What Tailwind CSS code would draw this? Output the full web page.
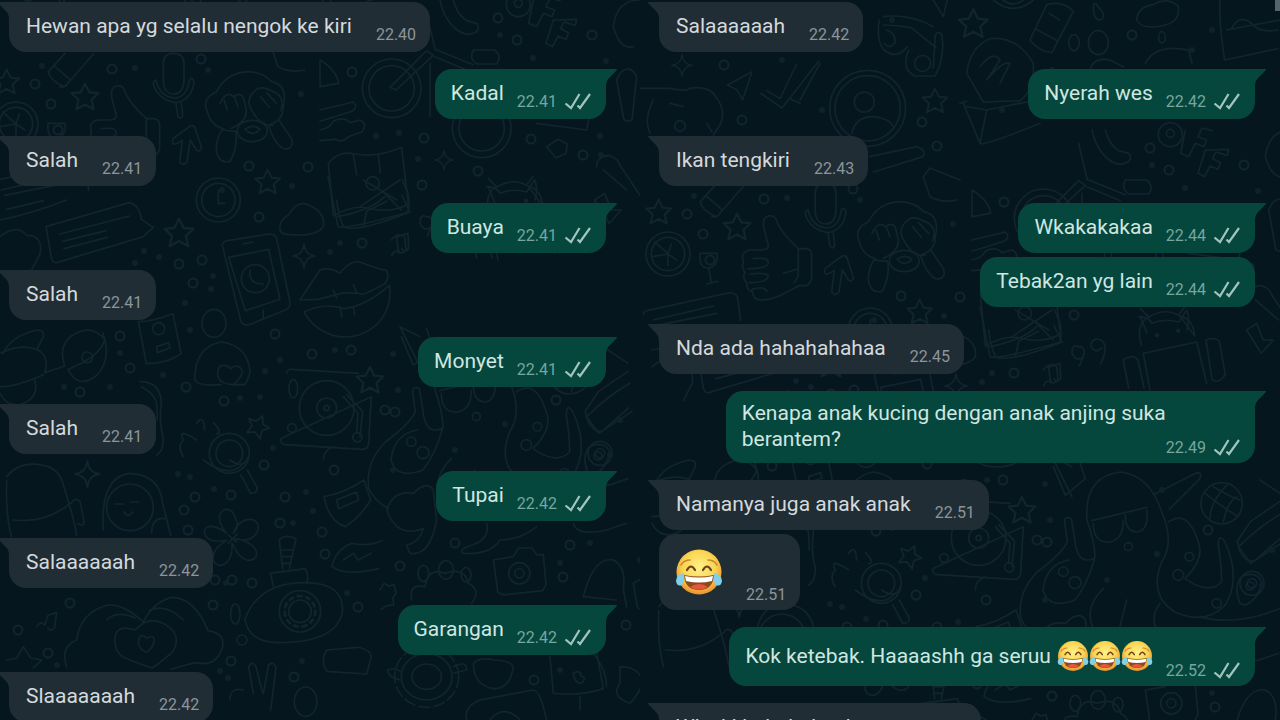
<!DOCTYPE html>
<html lang="id">
<head>
  <meta charset="UTF-8">
  <meta name="viewport" content="width=device-width, initial-scale=1.0">
  <title>Chat</title>
  <script src="https://cdn.jsdelivr.net/npm/@tailwindcss/browser@4"></script>
</head>
<body class="bg-[#05161e] font-['Roboto',sans-serif]">
  <!-- shared shapes -->
  <svg class="absolute w-0 h-0" aria-hidden="true">
    <defs>
      <symbol id="ticks" viewBox="0 0 28 18">
        <path d="M1.5 10.5 L7 15 L15.5 1 M13.5 12.5 L16 15 L26 1" fill="none" stroke="currentColor" stroke-width="2.2"/>
      </symbol>
      <symbol id="tail-in" viewBox="0 0 28 18">
        <path d="M0 0 H28 V16 H11 Q11 12 8 9 L1 2 Q0 1 0 0Z" fill="currentColor"/>
      </symbol>
      <symbol id="tail-out" viewBox="0 0 28 18">
        <path d="M28 0 H0 V16 H17 Q17 12 20 9 L27 2 Q28 1 28 0Z" fill="currentColor"/>
      </symbol>
      <radialGradient id="face" cx="50%" cy="40%" r="60%">
        <stop offset="0" stop-color="#fff08a"/>
        <stop offset=".6" stop-color="#fbd552"/>
        <stop offset="1" stop-color="#e8922e"/>
      </radialGradient>
      <symbol id="joy" viewBox="0 0 48 48">
        <circle cx="24" cy="24" r="22.5" fill="url(#face)"/>
        <path d="M6 17 Q9 12 15 12 M42 17 Q39 12 33 12" fill="none" stroke="#c98a2c" stroke-width="1.6" stroke-linecap="round"/>
        <path d="M12 22 Q16 15 20 22 M28 22 Q32 15 36 22" fill="none" stroke="#6b4219" stroke-width="2.2" stroke-linecap="round"/>
        <path d="M9 27 Q24 30 39 27 Q38 42 24 42 Q10 42 9 27Z" fill="#8a4a1c"/>
        <path d="M10 28 Q24 31 38 28 L37 33 Q24 36 11 33Z" fill="#fff"/>
        <path d="M15 39 Q24 33 33 39 Q24 44 15 39Z" fill="#e8553b"/>
        <path d="M9 25 Q1 27 1 33 Q2 39 7 37 Q10 34 9 25Z M39 25 Q47 27 47 33 Q46 39 41 37 Q38 34 39 25Z" fill="#7fd0e8"/>
      </symbol>
      <path id="star" d="M0-30 L10-10 L31-8 L15 7 L20 29 L0 18 L-20 29 L-15 7 L-31-8 L-10-10Z"/>
      <path id="spark" d="M0-36 Q3-4 34 0 Q3 4 0 36 Q-3 4 -34 0 Q-3-4 0-36Z"/>

      <!-- chat wallpaper tile, drawn at three times its size -->
      <g id="doodles" fill="none" stroke="#12252e" stroke-width="5" stroke-linejoin="round" stroke-linecap="round">
        <!-- microphone, thumb, monkey -->
        <g transform="scale(.3333)">
          <path d="M490 190 q0-30 30-30 q32 0 32 30 v54 q-4 38-30 38 q-30 0-32-38z M468 240 q-14 4-4 24 q20 40 66 44 q46-10 52-62 q-4-18-14-6 q-6 50-42 54 q-46-2-58-54z M528 310 l6 40 q8 8 14-2 l-4-40"/>
          <path d="M650 275 q30-58 95-60 q45 2 70 30 q50 10 35 75 q0 40-38 52 M650 275 q-46 20-28 60 q10 42 50 52 M660 310 q20-40 40-20 q30-20 34 20 q20 50-40 75 M672 300 l10 30 M704 292 l10 28 M770 268 q-40 30-10 70 q20 40 60 38 M770 268 q20-10 44 4 q44 16 28 60 M782 290 l26 32 M800 278 l30 32"/>
          <ellipse cx="757" cy="393" rx="45" ry="32"/><path d="M735 388 q24-18 45 0 q-20 24-45 0z"/>
          <path d="M665 390 q-26 50-10 80 q10 20 36 14 q24-50 16-90z M805 375 q20 60 48 72 q30 0 22-30 l-38-56"/>
          <path d="M145 215 l50-55 M180 260 q14 4 22-8 l78-90 M145 215 q4 26 48 46 M165 200 l46 40"/>
          <circle cx="48" cy="372" r="50"/><circle cx="48" cy="372" r="66"/><path d="M48 372 l-40-36 M48 372 l-48 8 M48 372 l10-30 M48 372 l26 18 M48 372 l0 34"/>
          <use href="#star" transform="translate(255 290) scale(1.3)"/><use href="#star" transform="translate(20 245) scale(1.2)"/><use href="#star" transform="translate(803 545) scale(1.2)"/>
          <circle cx="655" cy="600" r="50"/><circle cx="655" cy="600" r="66"/><path d="M655 570 v40 h20"/>
        </g>
        <g transform="translate(-12 70) scale(.3333)">
          <path d="M385 48 q-18 4-14 34 l14 54 q0 14-20 14 h-36 q-30 8-18 34 q-8 18 4 34 q-10 14 6 32 q-2 22 16 24 q0 24 24 26 q40 0 80-24 l40-20 q26 8 34-20 v-70 q0-18-16-20 h-24 q-54-50-66-86 q-4-14-24-12z M475 150 v76 l-12 22 M340 176 q50-6 44 16 q-6 14-60 14 M330 222 q60-6 54 10 q-6 16-56 16 M336 268 q40-10 44 6 M430 220 l40-12"/>
          <path d="M555 206 l52-38 q10-4 14 6 l20 60 q-6 14-16 6 l-18-30 -10 66 q-10 14-22 0 l8-64 -20 10 q-14 2-8-16z"/>
          <path d="M180 160 q-4 44 26 44 q28-4 26-44z M206 204 l8 44 M200 252 l34-8"/>
          <path d="M10 345 q0-10 14-14 l240-52 q28-4 30 22 l8 60 M40 360 l180-42 M50 376 l180-36"/>
        </g>
        <!-- pizza, bicycle, letters, map -->
        <g transform="translate(320 0) scale(.3333)">
          <circle cx="215" cy="265" r="88"/><circle cx="215" cy="265" r="68"/><circle cx="485" cy="385" r="88"/><circle cx="485" cy="385" r="68"/>
          <path d="M210 262 l110-110 20 14 -112 104z M350 150 l110 44 M345 170 l100 42 M320 40 l26 110 M460 150 h64 q24 20 6 42 h-60 q-24-16-10-42z M330 190 v160"/>
          <path d="M360 0 q10 50 40 80 q30 30 60 20 q24-10 10-30 l-30-8 q-30-20-40-62"/>
          <path d="M640 0 l-14 70 24 10 20-40 26 10 8-20 -26-10 12-26 30 8 M700 60 l-22 70 20 10 16-32 24 10 8-20 -24-12 10-20 34 10 4-18z"/>
          <circle cx="595" cy="14" r="36"/><circle cx="595" cy="10" r="12"/>
          <path d="M0 180 q50 30 56 70 l-56 10z M0 330 l100-24 q16 16-4 28 l-96 30 M0 390 q30-6 40-26 q30-16 50 4 l30-8 q24 10 6 36 l-40 14 q-20 20-40 8 l-46 4"/>
          <path d="M25 490 q30-40 80-28 q70 12 140-20 l20 170 q-50 30-120 12 q-50-10-105 24z M100 465 l10 60 M175 465 l6 54 M130 540 l100 60 M120 620 l120-80"/>
          <circle cx="158" cy="550" r="20"/>
          <path d="M880 80 q10-80 80-80 M880 80 q20 70 60 60 M900 220 q30-30 50 10 l-14 130 q-24 10-26-10 l-20-110z"/>
          <path d="M650 370 l150 20 8-40 M680 440 l34-22 28 14 -4 28 -30 14z M830 500 q0-30 36-34 q30 10 34 30 l60 90 M850 510 l70 60"/>
          <path d="M500 560 q30 0 40 20 q40-16 80-4 l24-36 q10 20 2 60 M505 560 l20 50"/>
          <use href="#spark" transform="translate(372 480) scale(.8)"/>
        </g>
        <!-- upper band -->
        <g transform="translate(-12 -130) scale(.3333)">
          <circle cx="683" cy="325" r="114"/><circle cx="683" cy="325" r="98"/><circle cx="673" cy="306" r="30"/><path d="M636 400 q10-50 64-50 q50 6 60 30"/>
          <path d="M730 50 q80-10 150 30 M730 75 q40 0 84 8 l74 60 M718 60 q-10 60 14 90 q40 30 70-10 M740 90 q30 10 24 40 q-16 20-32 0 M806 150 q-24 60 20 78 l60 0 q30-60 20-124 q-10-14-20 0 l-6 100"/><circle cx="848" cy="190" r="24"/>
          <path d="M362 280 l64 44 110-140 M380 272 l40 24 50-104 M480 300 l60-110 M450 296 l30 14 M262 255 l74-40 -28 84 -18-30z"/>
          <path d="M0 265 h90 q50 10 60 0 q60-10 80 30 q30 40 10 80 l-20 30 M40 300 q-30 60-10 100 M90 310 l40 10 M200 370 l16 26"/><circle cx="120" cy="378" r="16"/>
          <use href="#spark" transform="translate(126 196) scale(.9)"/><use href="#star" transform="translate(885 302) scale(1.2)"/>
          <path d="M690 470 l140-30 q30 10 20 30 l-150 46 M850 530 l20-26 90 36 M850 530 l20 60 q40 20 80 10 M880 0 l30 50 14-60"/>
        </g>
        <g transform="translate(308 -130) scale(.3333)">
          <path d="M20 220 q10-80 70-104 q80-10 130 74 q4 80-40 112 l-110 4z M60 200 q40-50 60-20 l-40 60 q50-60 70-50 l-30 60"/>
          <path d="M0 310 l20-6 M10 310 l50 120 q10 10 180-60 M20 320 l60 10 200-40 M80 330 l-20 100"/>
          <use href="#star" transform="translate(40 70) scale(1.4)"/>
          <path d="M210 120 l50-106 q50-14 80 20 l-64 124 q-40-4-66-38z M226 86 l66 36 M268 40 l30 20"/>
          <path d="M530 60 q4-40 50-46 q40-24 74 4 q10 50-50 60 q-60 10-74-18z M780 0 q-4 60 14 180 l160-34 M800 90 l160-30 M815 86 q20-44 60-16 q20 30 80 20 M556 190 q30-60 130-40 l10 40 M390 210 q10-40 60-30 l40 20"/>
          <ellipse cx="415" cy="128" rx="30" ry="36"/><ellipse cx="342" cy="128" rx="16" ry="24"/><ellipse cx="606" cy="112" rx="10" ry="17"/>
          <path d="M400 20 q4-20 14 0 q30 30 6 40 q-20 0-20-40z M100 0 q60 50 120 0 M130 0 q30 24 60 0"/>
        </g>
        <!-- banner, star, phone, lips, glasses, turntable -->
        <g transform="translate(0 200) scale(.3333)">
          <path d="M0 60 q100-20 200-60 M20 28 l110-26 M138 80 l250-72 q30 6 36 50 l36 24 -30 28 -260 78 q-10 2-16-14z M180 102 l208-54 M188 124 l130-32 M192 146 l130-34 M0 110 q50-40 80-4 q50 0 40 56 l-26 50"/>
          <use href="#star" transform="translate(537 98) scale(1.4)"/>
          <path d="M668 140 q-4-14 14-18 l124-20 q20 0 24 14 l40 190 q2 18-14 24 l-108 44 q-20 4-26-12z M686 172 l120-24 34 150 -104 34z M730 132 l30-6 M790 330 v24"/>
          <circle cx="766" cy="236" r="42"/><path d="M750 212 q-6 40 40 40"/>
          <path d="M840 90 q-4-30 26-46 q30-50 70-24 q40 20 34 60 q-20 30-100 24 q-26 0-30-14z M1010 0 q4 40 20 80 q40 20 200-44 l-24-50 M1090 80 l10-46 60-30"/>
          <path d="M900 300 l60-90 q30-10 60 10 q30-40 60-34 q50 20 80 26 q10 20-6 40 l-60 30 -60-4 -80 20z M912 336 q60-30 120-10 q70-10 136-70 q10 60-30 110 q-60 60-140 40 q-60-20-86-70z M1000 270 l10 24 M1060 254 l10 26 M1020 320 l6 30 M1060 320 l4 24"/>
          <use href="#spark" transform="translate(912 168)"/>
          <path d="M1175 166 q10-20 22-8 M1196 158 l-6-46 34-12 2 46 q-14 16-20 0"/>
          <path d="M415 365 q40 0 104-24 l24 120 q-40 30-104 30z M470 440 l36-12 4 16 -38 14z"/><circle cx="476" cy="386" r="18"/>
          <ellipse cx="642" cy="370" rx="36" ry="42"/><path d="M584 540 q0-100 80-114 q80 10 86 90 q-6 26-16 38 h-36 q-60-6-40-54 q20-10 34 6 q24-20 36 10 q-10 26-30 38 M584 540 q10 20 80 14"/>
          <path d="M10 460 q20-50 100-70 q24 0 20 20 l-20 40 M0 460 q60-30 110-12 q40 20 24 70 l60-20 q-20-60 20-90 q60-40 100 10 q-10 50-110 90 q30 60 84 20 q50-50 20-130 M0 560 q50 0 130-36 M0 580 q20 40 60 34 q60-20 44-74"/><circle cx="262" cy="472" r="16"/>
          <path d="M420 545 q60 0 64 60 q-8 60 6 110 q0 40-20 50 M424 560 q40 20 46 50 l2 50"/>
          <path d="M860 520 q2-14 16-12 l200 12 M1114 590 l-8 140 q-4 20-20 18 l-230-14 q-14 0-14-18z"/>
          <circle cx="980" cy="624" r="82"/><circle cx="980" cy="624" r="30"/><circle cx="980" cy="624" r="8"/>
          <path d="M1030 590 l44 50 -4 60 M1040 584 l48 50 -8 76"/><circle cx="1072" cy="712" r="14"/><ellipse cx="880" cy="566" rx="13" ry="28"/><circle cx="876" cy="684" r="13"/>
          <use href="#star" transform="translate(1110 540) scale(1.3)"/><use href="#star" transform="translate(774 678) rotate(25) scale(1.1)"/>
          <circle cx="688" cy="760" r="60"/><circle cx="688" cy="760" r="40"/><path d="M590 720 q-60-40-40 0 q-20 20 0 50 M590 670 q20-30 24 20 M640 668 q30 30 10 34"/>
          <path d="M1200 380 l60 120 M1200 380 l60 30"/>
        </g>
        <!-- ghost, astronaut, flower, hands, guitar -->
        <g transform="translate(0 460) scale(.3333)">
          <path d="M20 60 q-4 100 14 170 M20 50 q40-50 110-34 q50 10 60 60 q30 90 40 150 M40 180 q100 10 170-50 M214 130 q10-20 26-6 l12 60 q0 20-18 6"/>
          <use href="#spark" transform="translate(262 42) scale(1.1)"/>
          <circle cx="390" cy="142" r="70"/><path d="M310 210 q-10-160 80-170 q90 4 98 90 l24 96 M345 132 h26 M390 126 h26 M372 156 q14 20 26 0 M455 220 q0-50 40-44"/>
          <path d="M680 220 C630 160 680 130 700 160 C720 200 712 205 700 220 C720 160 790 170 772 215 C755 250 720 240 706 236 C790 250 780 310 740 300 C710 290 705 260 696 250 C700 320 650 330 640 300 C636 270 660 255 680 240 C600 260 600 190 640 200 C660 205 670 210 680 220 M686 226 l24 20 M712 222 l-28 28"/>
          <path d="M690 0 q40 30 56-10 M722 44 l30 56 q20 0 20-16 l-30-54 M610 0 q80 60 120 10"/>
          <path d="M972 110 q60-10 120-50 l20 60 q-30 50-76 80 q-50-16-64-90z M1010 120 l60-24 6 24 -60 26z M996 320 q10-50 60-70 q50 10 90-8 M996 320 q40 30 140 6 M1030 300 l30-20 14 20 40-20"/>
          <path d="M810 340 q80-10 106-14 q10 20 6 44 M812 342 l8 36 M838 240 q20-20 50-4 l-20 90 M838 240 l10 86 M845 270 h30 M846 290 h26 M848 310 h24"/>
          <path d="M735 478 q40-110 180-110 q120 0 112 90 q-20 90-190 90 q-90 0-102-70z"/><circle cx="900" cy="454" r="62"/><circle cx="900" cy="454" r="46" stroke-dasharray="12 14" stroke-width="8"/><circle cx="900" cy="454" r="34"/>
          <ellipse cx="706" cy="462" rx="14" ry="30"/><circle cx="726" cy="540" r="15"/>
          <path d="M200 620 q-20-60 30-80 q10-80 90-104 q50-6 110 50 q30-60 84-74 q70 0 110 100 q60 10 40 60 q-20 50-80 36 l-70 20 M320 480 q30-30 86-6 M450 450 q50-20 100 30 M345 540 q0-50 60-30 l24-20 q30-16 60 0 q60 30 30 84 q-20 20-62 50 q-60-20-90-34 q-24-20-22-50z M415 545 q4-30 26-10 q26-16 20 16 q-14 30-26 24 q-20-10-20-30z"/>
          <path d="M690 720 q0-40 40-30 M760 700 l-14-80 q10-20 22 0 l20 80 M790 700 l16-86 q16-10 22 8 l-16 130 M980 570 l96-8 q40 10 38 30 l-14 50 -120-8 q-20-30 0-64z M970 0 q0-30 30-40"/>
          <ellipse cx="917" cy="725" rx="34" ry="44"/>
          <path d="M110 500 q14-20 24-4 l10-30 26-8 -6 44 q-10 16-20 2 M20 600 l30-6 20-34 22 34 34 6 -26 24"/>
        </g>
        <!-- octopus, ball, camera, turtle -->
        <g transform="translate(308 330) scale(.3333)">
          <path d="M405 290 q0-40-24-110 q-10-130 100-144 q90 10 124 120 q40 90 0 150 q-40 100 40 150 q90 40 150-20 q50-80 0-190 q-20-30-20 10 q10 60 10 110 q-40 40-110-10 q60-60 40-110 q-30-100-90-60 M405 290 q-20 80-60 130 q-80 30-96-30 q10-80 80-90 M400 296 q-50 20-56-60 l-10-60 q-20-10-20 10 l8 60 q-20 40-90 90 q-60 60-50 140 q20 40 60 60 M430 385 q-60 60-30 120 M500 420 l-20 80 M600 430 q-30 40-10 80"/>
          <path d="M395 182 l166-40 M400 190 q0 60 50 56 q40-10 40-64 M496 166 q0 50 36 50 q36-8 28-66 M580 104 l130-66 q20 0 8 20 l-90 90"/>
          <circle cx="785" cy="130" r="62"/><path d="M735 100 q50 40 100 70 M760 80 q50 30 80 40 M800 76 q-50 50-50 100 M830 110 q-30 20-40 76"/>
          <circle cx="345" cy="368" r="18"/><circle cx="310" cy="335" r="14"/><circle cx="655" cy="345" r="16"/><circle cx="688" cy="290" r="13"/><circle cx="505" cy="260" r="12"/><circle cx="770" cy="430" r="14"/>
          <path d="M832 244 l40-60 88-60 M832 244 q10 60 50 60 l80-70 M840 430 q-20-50 4-80 q50-20 62 20 q-14 50-50 66z M900 60 l60 40 M280 20 l36 86 60-50 -20-60"/><circle cx="870" cy="378" r="12"/>
          <path d="M720 470 q100 30 240-24"/>
        </g>
        <g transform="translate(380 320) scale(.3333)">
          <path d="M340 720 l60-10 16-26 40 0 14 20 20 0 8 90 -10 18 -110 12 q-30 0-26-20z"/><circle cx="418" cy="760" r="32"/><circle cx="418" cy="760" r="14"/>
          <path d="M95 840 q-10-50 40-40 q10-60 60-40 q60-20 70 30 q40 20 10 60"/><ellipse cx="130" cy="760" rx="16" ry="24"/><ellipse cx="198" cy="750" rx="22" ry="28"/><ellipse cx="258" cy="764" rx="15" ry="22"/>
          <path d="M20 570 q20-60 80-50 q40-40 60-10 l10 90 q-20 110-80 100 l-10-24 q40-10 50-50 q-80 30-110-56z M320 610 q10 40-30 60 q-60 20-40 30 q80 6 110-40 q60 0 110-40 M580 610 q10 40 100 20 l60-20"/>
          <path d="M610 830 q30-120 90-110 q40 20 30 90 l10 50 M610 830 l100 10 M760 790 q40-30 60 0 l6 70 q-40 20-54 0z M820 880 l14 120 M810 980 q40-10 60 20 M810 980 q10 120 90 110"/>
          <ellipse cx="140" cy="1070" rx="76" ry="70"/><ellipse cx="140" cy="1070" rx="96" ry="92" stroke-dasharray="34 12"/><ellipse cx="140" cy="1070" rx="44" ry="38"/>
          <path d="M60 1080 q-40-10-36-30 q20-10 42 8 M220 1040 q40-20 40 10 l-40 10 M280 1030 q20-20 60-10 q50 0 60 20 q-10 70-60 66 q-60-10-60-76z M510 1010 l10 110 q80 10 150-14 l-20-110 M640 1000 q40 50 40 100 M580 1060 q20-14 24 10 q20 0 0 20 q-20 0-24-30z M260 1200 q-10-40 40-60 l160-30 q20 0 40 90 M720 1040 q60 0 70 50 q-20 40-40 60 q-60-20-30-60z M600 1130 v40 M330 1200 q40-50 90 0"/>
          <path d="M0 810 l12-20 14 8 16-4 6 26 -10 14 4 20 -24 4 -14 10"/>
          <circle cx="660" cy="400" r="36"/><circle cx="660" cy="400" r="14"/><path d="M620 290 l36 50 100-66 M620 290 q60-60 130-100"/>
        </g>
        <!-- folder, quotes, robot -->
        <g transform="translate(308 50) scale(.3333)">
          <path d="M60 380 l30 150 q20 10 200-40 q20-4 10-60 l-16-40 M90 500 q100-20 140-60 M230 430 l50 50 M336 520 q0-30 20-20 q20 0 16 24 l-14 34 M336 520 q10 24 30 14 M392 494 q10-26 34-12 q20 20-4 70 M392 494 q10 30 34 10"/>
          <path d="M545 496 q-20-60 20-86 l-24-24 M565 412 q50-30 90-6 l20-26 M660 408 q40 10 44 60z M550 520 l160-34 30 124 M550 520 l20 110 M490 540 q30-20 44 0 l18 84 M490 540 l16 84 M738 480 q30-10 40 4 l18 100 q-20 30-40 14z"/><path d="M590 466 h1 M654 452 h1" stroke-width="12"/>
          <path d="M250 570 q20-24 40-10 l4 40 q-20 20-24-4 M860 450 l30-20 20 50 30 0 -36 40z"/>
        </g>
        <!-- loose dots and rings -->
        <path stroke="#0f222b" stroke-width="6" d="M42 66h0M135 68h0M208 70h0M301 94h0M222 190h0M292 186h0M376 136h0M399 133h0M533 58h0M500 35h0M606 61h0M600 136h0M601 155h0M418 159h0M144 251h0M159 257h0M135 263h0M213 276h0M211 289h0M185 303h0M340 243h0M330 252h0M64 387h0M110 387h0M163 375h0M190 330h0M120 353h0M265 371h0M280 360h0M335 350h0M393 354h0M398 390h0M273 448h0M240 398h0M260 397h0M178 474h0M190 477h0M214 489h0M306 492h0M313 511h0M226 583h0M347 593h0M293 523h0M220 671h0M228 678h0M302 661h0M57 665h0M560 563h0M590 543h0M640 560h0M560 670h0M455 450h0M505 424h0M510 360h0M610 455h0M620 420h0M393 470h0M570 500h0M350 -20h0M560 -100h0M540 -80h0M400 -60h0M130 -70h0M170 -20h0M240 -110h0M555 640h0M470 640h0"/>
        <path stroke-width="11" d="M112 69h0M35 84h0M51 104h0M201 59h0M58 130h0M498 18h0M517 40h0M592 35h0M424 138h0M531 139h0M583 155h0M478 171h0M422 185h0M352 72h0M259 217h0M179 264h0M202 260h0M193 283h0M362 243h0M275 334h0M120 336h0M130 368h0M80 392h0M186 387h0M224 401h0M312 354h0M351 350h0M395 412h0M249 166h0M308 167h0M264 465h0M231 495h0M195 497h0M184 510h0M285 497h0M280 523h0M322 532h0M325 554h0M188 530h0M232 580h0M215 580h0M252 583h0M70 603h0M18 630h0M48 653h0M213 605h0M231 661h0M294 677h0M358 607h0M556 400h0M455 543h0M570 545h0M563 577h0M626 625h0M400 566h0M534 680h0M334 470h0M385 410h0M445 80h0M500 -40h0M480 -95h0M90 -10h0M72 -65h0M285 16h0M270 -8h0"/>
        <path stroke="#05161e" stroke-width="7" d="M112 69h0M35 84h0M51 104h0M201 59h0M58 130h0M498 18h0M517 40h0M592 35h0M424 138h0M531 139h0M583 155h0M478 171h0M422 185h0M352 72h0M259 217h0M179 264h0M202 260h0M193 283h0M362 243h0M275 334h0M120 336h0M130 368h0M80 392h0M186 387h0M224 401h0M312 354h0M351 350h0M395 412h0M249 166h0M308 167h0M264 465h0M231 495h0M195 497h0M184 510h0M285 497h0M280 523h0M322 532h0M325 554h0M188 530h0M232 580h0M215 580h0M252 583h0M70 603h0M18 630h0M48 653h0M213 605h0M231 661h0M294 677h0M358 607h0M556 400h0M455 543h0M570 545h0M563 577h0M626 625h0M400 566h0M534 680h0M334 470h0M385 410h0M445 80h0M500 -40h0M480 -95h0M90 -10h0M72 -65h0M285 16h0M270 -8h0"/>
      </g>
    </defs>
  </svg>

  <main class="relative grid grid-cols-2 h-screen overflow-hidden text-[21px] leading-[26px]">
    <!-- left part of the conversation -->
    <section class="relative overflow-hidden pt-[2px] pl-[9px] pr-[34px]">
      <svg class="absolute inset-0 w-full h-full" viewBox="0 0 640 720" preserveAspectRatio="xMinYMin slice" aria-hidden="true"><use href="#doodles"/></svg>
      <ol class="relative flex flex-col gap-[17px] text-[#d3d9dd]">
        <li class="relative self-start flex items-end gap-6 rounded-[17px] bg-[#212d34] pl-[17px] pr-[14px] pt-[11px] pb-[13px]">
          <svg class="absolute top-0 -left-[11px] w-7 h-[18px] text-[#212d34]"><use href="#tail-in"/></svg>
          <p class="relative">Hewan apa yg selalu nengok ke kiri</p>
          <time class="relative text-base leading-4 -mb-1 text-[#8b959b]">22.40</time>
        </li>
        <li class="relative self-end flex items-end gap-[13px] rounded-[17px] bg-[#05463d] pl-4 pr-[14px] pt-[11px] pb-[13px] text-[#cfe6e1]">
          <svg class="absolute top-0 -right-[11px] w-7 h-[18px] text-[#05463d]"><use href="#tail-out"/></svg>
          <p class="relative">Kadal</p>
          <span class="relative flex items-center gap-[7px] -mb-1 text-base leading-4 text-[#75a79f]"><time>22.41</time><svg class="w-7 h-[18px] -my-px text-[#a3c4be]" role="img" aria-label="Terkirim"><use href="#ticks"/></svg></span>
        </li>
        <li class="relative self-start flex items-end gap-6 rounded-[17px] bg-[#212d34] pl-[17px] pr-[14px] pt-[11px] pb-[13px]">
          <svg class="absolute top-0 -left-[11px] w-7 h-[18px] text-[#212d34]"><use href="#tail-in"/></svg>
          <p class="relative">Salah</p>
          <time class="relative text-base leading-4 -mb-1 text-[#8b959b]">22.41</time>
        </li>
        <li class="relative self-end flex items-end gap-[13px] rounded-[17px] bg-[#05463d] pl-4 pr-[14px] pt-[11px] pb-[13px] text-[#cfe6e1]">
          <svg class="absolute top-0 -right-[11px] w-7 h-[18px] text-[#05463d]"><use href="#tail-out"/></svg>
          <p class="relative">Buaya</p>
          <span class="relative flex items-center gap-[7px] -mb-1 text-base leading-4 text-[#75a79f]"><time>22.41</time><svg class="w-7 h-[18px] -my-px text-[#a3c4be]" role="img" aria-label="Terkirim"><use href="#ticks"/></svg></span>
        </li>
        <li class="relative self-start flex items-end gap-6 rounded-[17px] bg-[#212d34] pl-[17px] pr-[14px] pt-[11px] pb-[13px]">
          <svg class="absolute top-0 -left-[11px] w-7 h-[18px] text-[#212d34]"><use href="#tail-in"/></svg>
          <p class="relative">Salah</p>
          <time class="relative text-base leading-4 -mb-1 text-[#8b959b]">22.41</time>
        </li>
        <li class="relative self-end flex items-end gap-[13px] rounded-[17px] bg-[#05463d] pl-4 pr-[14px] pt-[11px] pb-[13px] text-[#cfe6e1]">
          <svg class="absolute top-0 -right-[11px] w-7 h-[18px] text-[#05463d]"><use href="#tail-out"/></svg>
          <p class="relative">Monyet</p>
          <span class="relative flex items-center gap-[7px] -mb-1 text-base leading-4 text-[#75a79f]"><time>22.41</time><svg class="w-7 h-[18px] -my-px text-[#a3c4be]" role="img" aria-label="Terkirim"><use href="#ticks"/></svg></span>
        </li>
        <li class="relative self-start flex items-end gap-6 rounded-[17px] bg-[#212d34] pl-[17px] pr-[14px] pt-[11px] pb-[13px]">
          <svg class="absolute top-0 -left-[11px] w-7 h-[18px] text-[#212d34]"><use href="#tail-in"/></svg>
          <p class="relative">Salah</p>
          <time class="relative text-base leading-4 -mb-1 text-[#8b959b]">22.41</time>
        </li>
        <li class="relative self-end flex items-end gap-[13px] rounded-[17px] bg-[#05463d] pl-4 pr-[14px] pt-[11px] pb-[13px] text-[#cfe6e1]">
          <svg class="absolute top-0 -right-[11px] w-7 h-[18px] text-[#05463d]"><use href="#tail-out"/></svg>
          <p class="relative">Tupai</p>
          <span class="relative flex items-center gap-[7px] -mb-1 text-base leading-4 text-[#75a79f]"><time>22.42</time><svg class="w-7 h-[18px] -my-px text-[#a3c4be]" role="img" aria-label="Terkirim"><use href="#ticks"/></svg></span>
        </li>
        <li class="relative self-start flex items-end gap-6 rounded-[17px] bg-[#212d34] pl-[17px] pr-[14px] pt-[11px] pb-[13px]">
          <svg class="absolute top-0 -left-[11px] w-7 h-[18px] text-[#212d34]"><use href="#tail-in"/></svg>
          <p class="relative">Salaaaaaah</p>
          <time class="relative text-base leading-4 -mb-1 text-[#8b959b]">22.42</time>
        </li>
        <li class="relative self-end flex items-end gap-[13px] rounded-[17px] bg-[#05463d] pl-4 pr-[14px] pt-[11px] pb-[13px] text-[#cfe6e1]">
          <svg class="absolute top-0 -right-[11px] w-7 h-[18px] text-[#05463d]"><use href="#tail-out"/></svg>
          <p class="relative">Garangan</p>
          <span class="relative flex items-center gap-[7px] -mb-1 text-base leading-4 text-[#75a79f]"><time>22.42</time><svg class="w-7 h-[18px] -my-px text-[#a3c4be]" role="img" aria-label="Terkirim"><use href="#ticks"/></svg></span>
        </li>
        <li class="relative self-start flex items-end gap-6 rounded-[17px] bg-[#212d34] pl-[17px] pr-[14px] pt-[11px] pb-[13px]">
          <svg class="absolute top-0 -left-[11px] w-7 h-[18px] text-[#212d34]"><use href="#tail-in"/></svg>
          <p class="relative">Slaaaaaaah</p>
          <time class="relative text-base leading-4 -mb-1 text-[#8b959b]">22.42</time>
        </li>
      </ol>
    </section>

    <!-- right part of the conversation -->
    <section class="relative overflow-hidden pt-[2px] pl-[19px] pr-[25px]">
      <svg class="absolute inset-0 w-full h-full" viewBox="0 0 640 720" preserveAspectRatio="xMinYMin slice" aria-hidden="true"><use href="#doodles" x="12" y="130"/></svg>
      <div class="absolute top-0 right-0 w-[5px] h-[11px] bg-[#56646b]"></div>
      <ol class="relative flex flex-col gap-[17px] text-[#d3d9dd]">
        <li class="relative self-start flex items-end gap-6 rounded-[17px] bg-[#212d34] pl-[17px] pr-[14px] pt-[11px] pb-[13px]">
          <svg class="absolute top-0 -left-[11px] w-7 h-[18px] text-[#212d34]"><use href="#tail-in"/></svg>
          <p class="relative">Salaaaaaah</p>
          <time class="relative text-base leading-4 -mb-1 text-[#8b959b]">22.42</time>
        </li>
        <li class="relative self-end flex items-end gap-[13px] rounded-[17px] bg-[#05463d] pl-4 pr-[14px] pt-[11px] pb-[13px] text-[#cfe6e1]">
          <svg class="absolute top-0 -right-[11px] w-7 h-[18px] text-[#05463d]"><use href="#tail-out"/></svg>
          <p class="relative">Nyerah wes</p>
          <span class="relative flex items-center gap-[7px] -mb-1 text-base leading-4 text-[#75a79f]"><time>22.42</time><svg class="w-7 h-[18px] -my-px text-[#a3c4be]" role="img" aria-label="Terkirim"><use href="#ticks"/></svg></span>
        </li>
        <li class="relative self-start flex items-end gap-6 rounded-[17px] bg-[#212d34] pl-[17px] pr-[14px] pt-[11px] pb-[13px]">
          <svg class="absolute top-0 -left-[11px] w-7 h-[18px] text-[#212d34]"><use href="#tail-in"/></svg>
          <p class="relative">Ikan tengkiri</p>
          <time class="relative text-base leading-4 -mb-1 text-[#8b959b]">22.43</time>
        </li>
        <li class="self-stretch">
          <ol class="flex flex-col items-end gap-1 text-[#cfe6e1]">
            <li class="relative flex items-end gap-[13px] rounded-[17px] bg-[#05463d] pl-4 pr-[14px] pt-[11px] pb-[13px]">
              <svg class="absolute top-0 -right-[11px] w-7 h-[18px] text-[#05463d]"><use href="#tail-out"/></svg>
              <p class="relative">Wkakakakaa</p>
              <span class="relative flex items-center gap-[7px] -mb-1 text-base leading-4 text-[#75a79f]"><time>22.44</time><svg class="w-7 h-[18px] -my-px text-[#a3c4be]" role="img" aria-label="Terkirim"><use href="#ticks"/></svg></span>
            </li>
            <li class="relative flex items-end gap-[13px] rounded-[17px] bg-[#05463d] pl-4 pr-[14px] pt-[11px] pb-[13px]">
              <p class="relative">Tebak2an yg lain</p>
              <span class="relative flex items-center gap-[7px] -mb-1 text-base leading-4 text-[#75a79f]"><time>22.44</time><svg class="w-7 h-[18px] -my-px text-[#a3c4be]" role="img" aria-label="Terkirim"><use href="#ticks"/></svg></span>
            </li>
          </ol>
        </li>
        <li class="relative self-start flex items-end gap-6 rounded-[17px] bg-[#212d34] pl-[17px] pr-[14px] pt-[11px] pb-[13px]">
          <svg class="absolute top-0 -left-[11px] w-7 h-[18px] text-[#212d34]"><use href="#tail-in"/></svg>
          <p class="relative">Nda ada hahahahahaa</p>
          <time class="relative text-base leading-4 -mb-1 text-[#8b959b]">22.45</time>
        </li>
        <li class="relative self-end flex items-end rounded-[17px] bg-[#05463d] pl-4 pr-[14px] pt-[9px] pb-[11px] text-[#cfe6e1]">
          <svg class="absolute top-0 -right-[11px] w-7 h-[18px] text-[#05463d]"><use href="#tail-out"/></svg>
          <p class="relative w-[428px] -mr-1">Kenapa anak kucing dengan anak anjing suka berantem?</p>
          <span class="relative flex items-center gap-[7px] -mb-1 text-base leading-4 text-[#75a79f]"><time>22.49</time><svg class="w-7 h-[18px] -my-px text-[#a3c4be]" role="img" aria-label="Terkirim"><use href="#ticks"/></svg></span>
        </li>
        <li class="self-stretch">
          <ol class="flex flex-col items-start gap-1">
            <li class="relative flex items-end gap-6 rounded-[17px] bg-[#212d34] pl-[17px] pr-[14px] pt-[11px] pb-[13px]">
              <svg class="absolute top-0 -left-[11px] w-7 h-[18px] text-[#212d34]"><use href="#tail-in"/></svg>
              <p class="relative">Namanya juga anak anak</p>
              <time class="relative text-base leading-4 -mb-1 text-[#8b959b]">22.51</time>
            </li>
            <li class="relative flex items-end gap-[23px] rounded-[17px] bg-[#212d34] pl-4 pr-[14px] pt-[14px] pb-[14px]">
              <svg class="w-12 h-12" role="img" aria-label="Tertawa sampai menangis"><use href="#joy"/></svg>
              <time class="text-base leading-4 -mb-[7px] text-[#8b959b]">22.51</time>
            </li>
          </ol>
        </li>
        <li class="relative self-end flex items-end gap-[13px] rounded-[17px] bg-[#05463d] pl-4 pr-[14px] pt-[13px] pb-[14px] text-[#cfe6e1]">
          <svg class="absolute top-0 -right-[11px] w-7 h-[18px] text-[#05463d]"><use href="#tail-out"/></svg>
          <p class="relative flex items-center h-8">Kok ketebak. Haaaashh ga seruu
            <span class="flex ml-[6px]" role="img" aria-label="Tertawa sampai menangis">
              <svg class="w-8 h-8"><use href="#joy"/></svg>
              <svg class="w-8 h-8"><use href="#joy"/></svg>
              <svg class="w-8 h-8"><use href="#joy"/></svg>
            </span>
          </p>
          <span class="relative flex items-center gap-[7px] -mb-[7px] text-base leading-4 text-[#75a79f]"><time>22.52</time><svg class="w-7 h-[18px] -my-px text-[#a3c4be]" role="img" aria-label="Terkirim"><use href="#ticks"/></svg></span>
        </li>
        <li class="relative self-start flex items-end gap-6 rounded-[17px] bg-[#212d34] pl-[17px] pr-[14px] pt-[11px] pb-[13px]">
          <svg class="absolute top-0 -left-[11px] w-7 h-[18px] text-[#212d34]"><use href="#tail-in"/></svg>
          <p class="relative">Wkwkkhahahahaahaaaa</p>
          <time class="relative text-base leading-4 -mb-1 text-[#8b959b]">22.52</time>
        </li>
      </ol>
    </section>
  </main>
</body>
</html>
